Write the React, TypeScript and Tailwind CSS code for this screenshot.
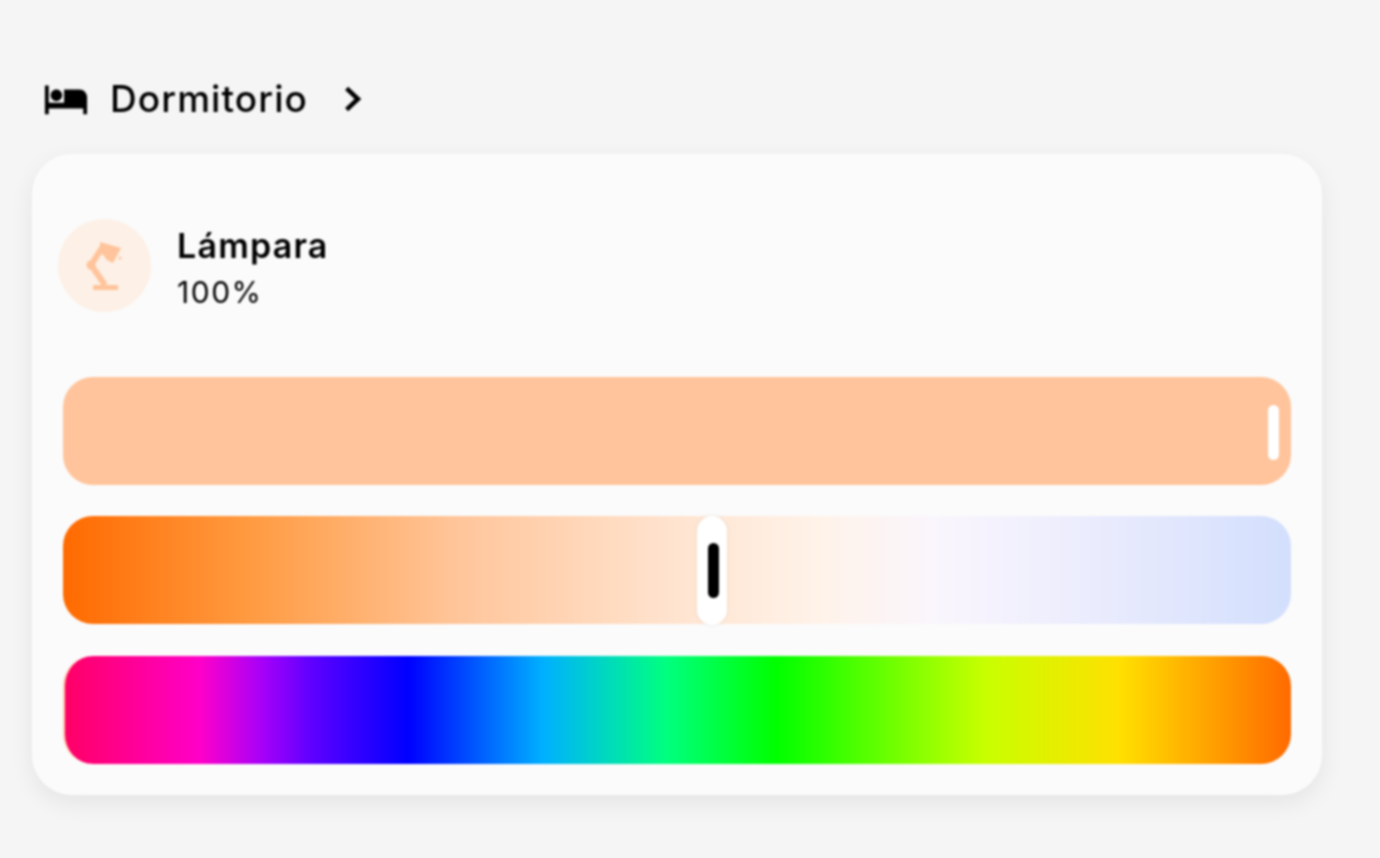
import React from 'react'

const BedIcon = () => (
  <svg viewBox="0 0 24 24" className="w-[46px] h-[46px] shrink-0 fill-black">
    <path d="M7 13c1.66 0 3-1.34 3-3S8.66 7 7 7s-3 1.34-3 3 1.34 3 3 3zm12-6h-8v7H3V5H1v15h2v-3h18v3h2v-9c0-2.21-1.79-4-4-4z" />
  </svg>
)

const ChevronIcon = () => (
  <svg viewBox="0 0 24 24" className="w-[34px] h-[34px] shrink-0 fill-none stroke-black stroke-[3.2]">
    <path d="M7.5 4.5 15.5 12l-8 7.5" />
  </svg>
)

const LampIcon = () => (
  <svg viewBox="0 0 40 52" className="w-[40px] h-[52px] fill-[#ffc49b]">
    <rect x="8" y="45" width="25" height="5" rx="1" />
    <path d="M17 8 6 25l14 20" className="fill-none stroke-[#ffc49b] stroke-[6]" />
    <circle cx="6" cy="25" r="4.5" />
    <path d="M15 2l21 6-8 15-6-3-7-9z" />
    <circle cx="35" cy="18" r="1.5" />
  </svg>
)

export default function App() {
  return (
    <div className="w-[1380px] h-[858px] overflow-hidden bg-[#f5f5f6]">
      <div className="h-full font-['Inter',sans-serif] text-black pt-[74px] px-[32px] blur-[0.8px]">
        <div className="flex items-center h-[50px] pl-[11px]">
          <BedIcon />
          <span className="ml-[21px] text-[37px] leading-[50px] tracking-[1.1px] font-medium">Dormitorio</span>
          <span className="ml-[28px]"><ChevronIcon /></span>
        </div>

        <div className="mt-[30px] w-[1290px] h-[641px] rounded-[40px] bg-[#fbfbfb] shadow-[0_8px_24px_rgba(0,0,0,0.07)] pt-[65px] pl-[26px] pr-[31px]">
          <div className="flex items-center h-[93px]">
            <div className="w-[93px] h-[93px] rounded-full bg-[#fdf0e6] flex items-center justify-center">
              <LampIcon />
            </div>
            <div className="ml-[26px] pt-[6px]">
              <div className="text-[34px] leading-[47px] font-semibold tracking-[1.2px]">Lámpara</div>
              <div className="text-[30px] leading-[47px] tracking-[1.5px]">100%</div>
            </div>
          </div>

          <div className="ml-[5px] mt-[65px] flex flex-col gap-[31px]">
            <div className="relative h-[108px] rounded-[30px] bg-[#ffc49b]">
              <div className="absolute right-[12px] top-[28px] w-[11px] h-[55px] rounded-full bg-white" />
            </div>

            <div className="relative h-[108px] rounded-[30px] bg-[linear-gradient(90deg,#ff6a00_0%,#ff9a40_15%,#ffc59a_32%,#ffe4d0_50%,#fff3ea_62%,#faf6fd_71%,#e9ebfd_85%,#d3dffd_100%)]">
              <div className="absolute left-[634px] top-0 w-[30px] h-[109px] pl-[2px] rounded-[15px] bg-white shadow-[0_0_4px_rgba(0,0,0,0.08)] flex items-center justify-center">
                <div className="w-[11px] h-[55px] rounded-full bg-black" />
              </div>
            </div>

            <div className="mt-px h-[108px] rounded-[30px] border-l-2 border-[#ffc9a8] bg-[linear-gradient(90deg,#ff0066_0%,#ff00c8_11%,#a800f8_16%,#6000ff_20%,#0000ff_28%,#00b0ff_39%,#00ff80_49%,#00ff00_58%,#c8ff00_75%,#ffe000_86%,#ff6a00_100%)]" />
          </div>
        </div>
      </div>
    </div>
  )
}
